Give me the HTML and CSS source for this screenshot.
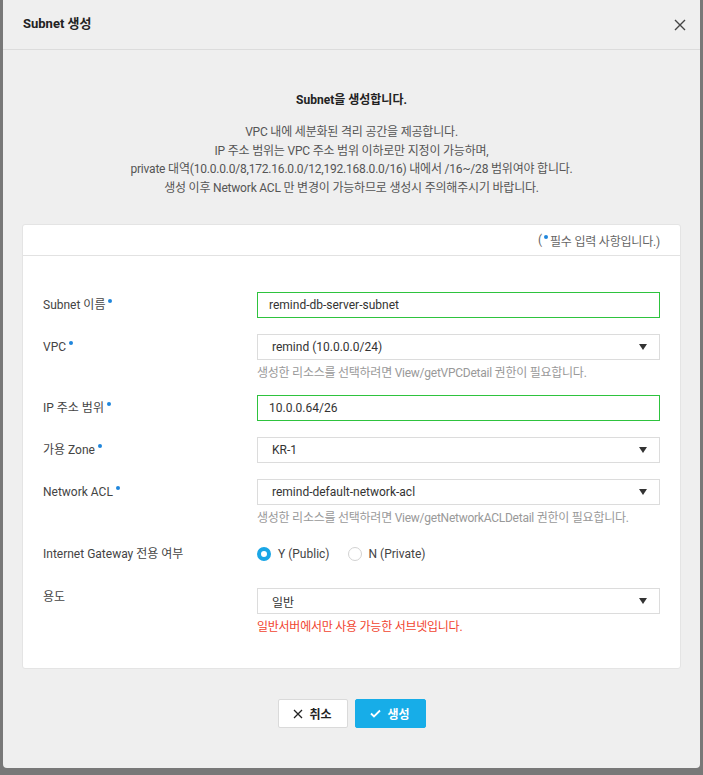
FILE: index.html
```html
<!DOCTYPE html>
<html lang="ko">
<head>
<meta charset="utf-8">
<title>Subnet 생성</title>
<link rel="stylesheet" href="styles.css">
</head>
<body>
<div class="modal">
  <div class="modal-header">
    <h2 class="modal-title">Subnet 생성</h2>
    <button class="close-btn" type="button" aria-label="닫기">
      <svg width="12" height="12" viewBox="0 0 12 12"><path d="M1 1L11 11M11 1L1 11" stroke="#444" stroke-width="1.4" fill="none"/></svg>
    </button>
  </div>
  <div class="modal-body">
    <p class="intro-title">Subnet을 생성합니다.</p>
    <p class="intro-desc">VPC 내에 세분화된 격리 공간을 제공합니다.<br>IP 주소 범위는 VPC 주소 범위 이하로만 지정이 가능하며,<br>private 대역(10.0.0.0/8,172.16.0.0/12,192.168.0.0/16) 내에서 /16~/28 범위여야 합니다.<br>생성 이후 Network ACL 만 변경이 가능하므로 생성시 주의해주시기 바랍니다.</p>

    <div class="card">
      <div class="card-head">(<span class="req-dot"></span>필수 입력 사항입니다.)</div>
      <div class="form">
        <div class="row">
          <div class="label">Subnet 이름<span class="req-dot"></span></div>
          <div class="field">
            <div class="input valid">remind-db-server-subnet</div>
          </div>
        </div>
        <div class="row">
          <div class="label">VPC<span class="req-dot"></span></div>
          <div class="field">
            <div class="select"><span>remind (10.0.0.0/24)</span><span class="caret"></span></div>
            <div class="help">생성한 리소스를 선택하려면 View/getVPCDetail 권한이 필요합니다.</div>
          </div>
        </div>
        <div class="row">
          <div class="label">IP 주소 범위<span class="req-dot"></span></div>
          <div class="field">
            <div class="input valid">10.0.0.64/26</div>
          </div>
        </div>
        <div class="row">
          <div class="label">가용 Zone<span class="req-dot"></span></div>
          <div class="field">
            <div class="select"><span>KR-1</span><span class="caret"></span></div>
          </div>
        </div>
        <div class="row">
          <div class="label">Network ACL<span class="req-dot"></span></div>
          <div class="field">
            <div class="select"><span>remind-default-network-acl</span><span class="caret"></span></div>
            <div class="help">생성한 리소스를 선택하려면 View/getNetworkACLDetail 권한이 필요합니다.</div>
          </div>
        </div>
        <div class="row row-radio">
          <div class="label label-radio">Internet Gateway 전용 여부</div>
          <div class="field radios">
            <label class="radio"><span class="radio-dot checked"></span>Y (Public)</label>
            <label class="radio"><span class="radio-dot"></span>N (Private)</label>
          </div>
        </div>
        <div class="row">
          <div class="label label-top">용도</div>
          <div class="field">
            <div class="select"><span>일반</span><span class="caret"></span></div>
            <div class="help help-error">일반서버에서만 사용 가능한 서브넷입니다.</div>
          </div>
        </div>
      </div>
    </div>

    <div class="actions">
      <button class="btn btn-cancel" type="button">
        <svg width="10" height="10" viewBox="0 0 10 10"><path d="M1 1L9 9M9 1L1 9" stroke="#222" stroke-width="1.3" fill="none"/></svg>
        취소
      </button>
      <button class="btn btn-primary" type="button">
        <svg width="11" height="9" viewBox="0 0 11 9"><path d="M1 4.5L4 7.5L10 1.5" stroke="#fff" stroke-width="1.8" fill="none"/></svg>
        생성
      </button>
    </div>
  </div>
</div>
</body>
</html>
```
FILE: styles.css
```css
html, body {
  margin: 0;
  padding: 0;
  background: #787878;
  min-height: 100%;
}
body {
  font-family: Roboto, "Noto Sans CJK KR", sans-serif;
  font-size: 12px;
  color: #333;
}
.modal {
  margin: 0 3px;
  width: 697px;
  background: #efefef;
  border-radius: 0 0 4px 4px;
}
.modal-header {
  height: 49px;
  border-bottom: 1px solid #dcdcdc;
  display: flex;
  align-items: flex-start;
  justify-content: space-between;
  padding: 0 14px 0 20px;
}
.modal-title {
  margin: 15px 0 0;
  font-size: 13px;
  line-height: 18px;
  font-weight: 700;
  color: #222;
}
.close-btn {
  margin-top: 19px;
  padding: 0;
  border: 0;
  background: none;
  width: 12px;
  height: 12px;
  display: flex;
}
.modal-body {
  padding: 41px 19px 40px;
}
.intro-title {
  margin: 0;
  text-align: center;
  font-weight: 700;
  font-size: 12px;
  line-height: 18px;
  color: #222;
}
.intro-desc {
  margin: 14px 0 0;
  text-align: center;
  line-height: 18.5px;
  color: #555;
  letter-spacing: -0.2px;
}
.card {
  margin-top: 27px;
  background: #fff;
  border: 1px solid #e4e4e4;
  border-radius: 3px;
}
.card-head {
  height: 30px;
  border-bottom: 1px solid #e2e2e2;
  display: flex;
  align-items: center;
  justify-content: flex-end;
  padding-right: 20px;
  color: #666;
  letter-spacing: -0.2px;
}
.card-head .req-dot {
  margin: -6px 2px 0 2px;
}
.req-dot {
  display: inline-block;
  width: 4px;
  height: 4px;
  border-radius: 50%;
  background: #1f86dc;
  margin: 0 0 0 3px;
  vertical-align: 6px;
}
.form {
  padding: 36px 20px 35px 20px;
  display: flex;
  flex-direction: column;
  gap: 16px;
}
.row {
  display: flex;
}
.row-radio {
  margin-bottom: 4px;
}
.label {
  width: 214px;
  flex: none;
  line-height: 26px;
  color: #444;
}
.label-radio {
  line-height: 28px;
}
.label-top {
  line-height: 18px;
}
.field {
  flex: 1;
}
.input, .select {
  box-sizing: border-box;
  height: 26px;
  border: 1px solid #dcdcdc;
  background: #fff;
  display: flex;
  align-items: center;
  color: #333;
}
.input {
  padding: 0 11px;
}
.input.valid {
  border-color: #2ec33e;
}
.select {
  padding: 0 12px 0 14px;
  justify-content: space-between;
}
.caret {
  width: 0;
  height: 0;
  border-left: 4px solid transparent;
  border-right: 4px solid transparent;
  border-top: 6px solid #333;
}
.help {
  margin-top: 7px;
  line-height: 12px;
  color: #999;
  letter-spacing: -0.25px;
}
.help-error {
  color: #f1452f;
}
.radios {
  display: flex;
  align-items: center;
  gap: 18px;
  height: 28px;
}
.radio {
  display: flex;
  align-items: center;
  gap: 7px;
  color: #444;
}
.radio-dot {
  box-sizing: border-box;
  width: 14px;
  height: 14px;
  border-radius: 50%;
  border: 1px solid #d2d2d2;
  background: #fff;
}
.radio-dot.checked {
  border: 4px solid #1aa6e6;
  background: #fff;
}
.actions {
  margin-top: 30px;
  display: flex;
  justify-content: center;
  gap: 7px;
}
.btn {
  box-sizing: border-box;
  height: 29px;
  display: flex;
  align-items: center;
  justify-content: center;
  gap: 6px;
  font-family: Roboto, "Noto Sans CJK KR", sans-serif;
  font-size: 12px;
  font-weight: 700;
  border-radius: 2px;
  padding: 0;
}
.btn-cancel {
  width: 70px;
  background: #fff;
  border: 1px solid #dadada;
  color: #222;
}
.btn-primary {
  width: 71px;
  background: #17ade8;
  border: 1px solid #17ade8;
  color: #fff;
}
```
